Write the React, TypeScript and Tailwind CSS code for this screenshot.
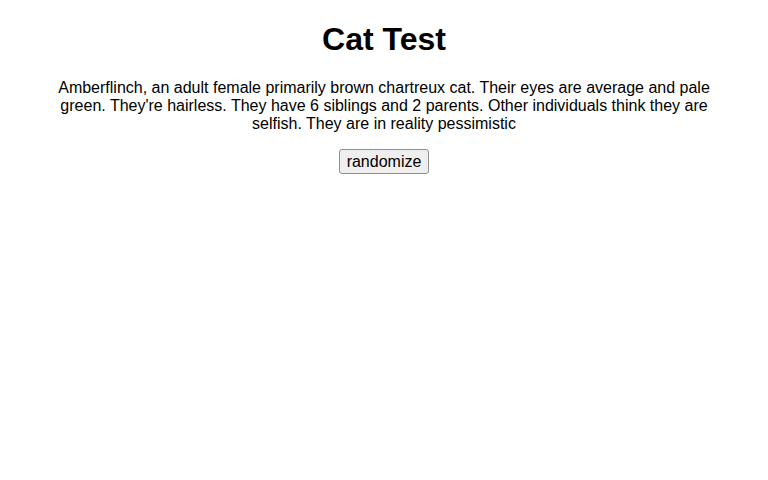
import { useState } from 'react';

const text =
  "Amberflinch, an adult female primarily brown chartreux cat. Their eyes are average and pale green. They're hairless. They have 6 siblings and 2 parents. Other individuals think they are selfish. They are in reality pessimistic";

export default function App() {
  const [desc] = useState(text);

  return (
    <div className="min-h-screen bg-white text-black text-center font-['Liberation_Sans',Arial,sans-serif] px-2">
      <h1 className="text-[32px] font-bold leading-[37px] pt-[21px] mb-[21px]">Cat Test</h1>
      <p className="max-w-[680px] mx-auto text-base leading-[18px] mb-4">{desc}</p>
      <button className="bg-[#efefef] border border-[#8f8f8f] rounded-[3px] px-[7px] pt-[3px] pb-[2px] text-base leading-[18px] text-black">
        randomize
      </button>
    </div>
  );
}
